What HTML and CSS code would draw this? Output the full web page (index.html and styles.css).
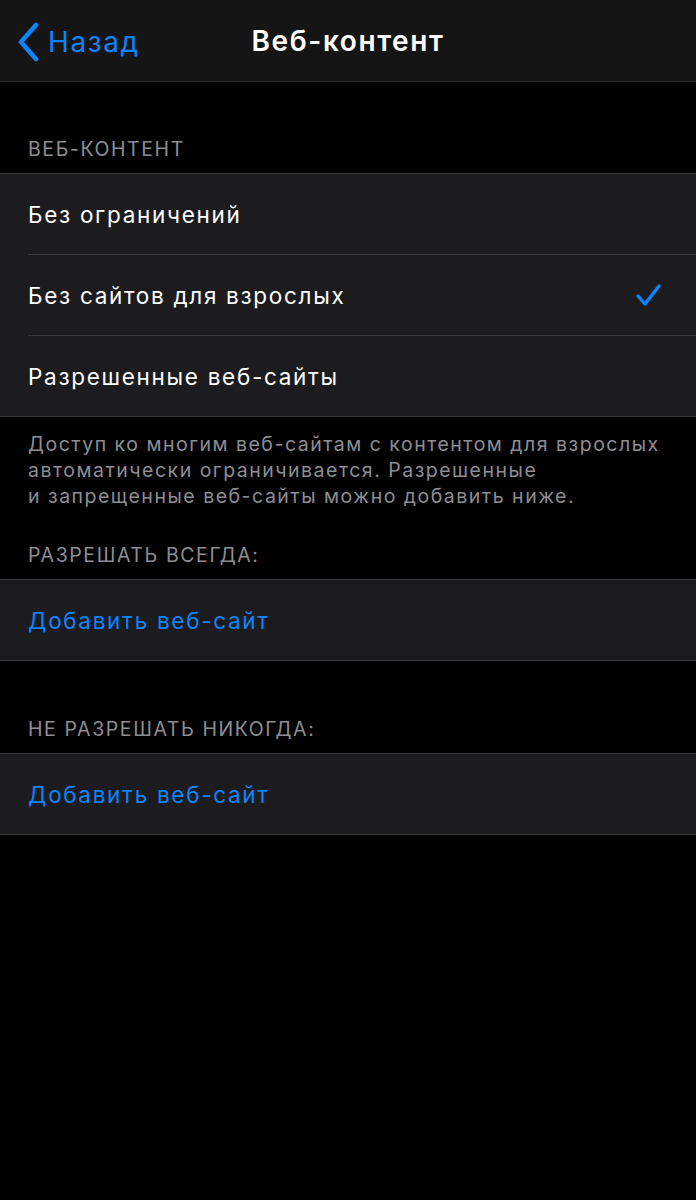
FILE: index.html
```html
<!DOCTYPE html>
<html lang="ru">
<head>
  <meta charset="UTF-8" />
  <meta name="viewport" content="width=device-width, initial-scale=1.0"/>
  <title>Веб-контент</title>
  <link rel="stylesheet" href="styles.css">
</head>
<body>
  <div class="navbar">
    <a class="back" href="#">
      <svg class="chevron" width="24" height="40" viewBox="0 0 24 40">
        <path d="M20 3 L5 20 L20 37" fill="none" stroke="#0a84ff" stroke-width="4.6" stroke-linecap="round" stroke-linejoin="round"/>
      </svg>
      <span>Назад</span>
    </a>
    <h1 class="title">Веб-контент</h1>
  </div>

  <div class="section first">
    <div class="section-header">Веб-контент</div>
    <div class="group">
      <div class="row"><span>Без ограничений</span></div>
      <div class="row">
        <span>Без сайтов для взрослых</span>
        <svg class="check" width="28" height="24" viewBox="0 0 28 24">
          <path d="M4 13 L11 21 L25 3" fill="none" stroke="#0a84ff" stroke-width="3.4" stroke-linecap="round" stroke-linejoin="round"/>
        </svg>
      </div>
      <div class="row"><span>Разрешенные веб-сайты</span></div>
    </div>
    <p class="section-footer">Доступ ко многим веб-сайтам с контентом для взрослых автоматически ограничивается. Разрешенные<br>и запрещенные веб-сайты можно добавить ниже.</p>
  </div>

  <div class="section">
    <div class="section-header">Разрешать всегда:</div>
    <div class="group">
      <div class="row link">Добавить веб-сайт</div>
    </div>
  </div>

  <div class="section spaced">
    <div class="section-header">Не разрешать никогда:</div>
    <div class="group">
      <div class="row link">Добавить веб-сайт</div>
    </div>
  </div>
</body>
</html>
```

FILE: styles.css
```css
body {
  margin: 0;
  background: #000;
  color: #fff;
  font-family: Inter, Roboto, sans-serif;
  width: 696px;
}

.navbar {
  height: 81px;
  background: #151515;
  border-bottom: 1px solid #2a2a2c;
  display: flex;
  align-items: center;
  justify-content: center;
  position: relative;
}
.back {
  position: absolute;
  left: 16px;
  top: 22px;
  display: flex;
  align-items: center;
  gap: 8px;
  color: #0a84ff;
  text-decoration: none;
  font-size: 28px;
  line-height: 40px;
  letter-spacing: 1.6px;
}
.chevron {
  display: block;
}
.title {
  margin: 0;
  font-size: 28px;
  font-weight: 600;
  letter-spacing: 1.6px;
}

.section.first {
  padding-top: 50px;
}
.section.spaced {
  padding-top: 51px;
}
.section-header {
  padding: 0 28px;
  height: 37px;
  color: #8d8d93;
  font-size: 19.5px;
  text-transform: uppercase;
  line-height: 26px;
  letter-spacing: 1.6px;
  margin-top: 4px;
}
.group {
  background: #1c1c1e;
  border-top: 1px solid #3a3a3c;
  border-bottom: 1px solid #3a3a3c;
}
.row {
  height: 80px;
  margin-left: 28px;
  padding-right: 34px;
  display: flex;
  align-items: center;
  justify-content: space-between;
  font-size: 22.5px;
  letter-spacing: 1.7px;
}
.row + .row {
  border-top: 1px solid #3a3a3c;
}
.row.link {
  color: #0a84ff;
}
.check {
  display: block;
}
.section-footer {
  margin: 0;
  padding: 14px 20px 29px 28px;
  color: #8d8d93;
  font-size: 19.5px;
  line-height: 26px;
  letter-spacing: 1.5px;
}
```
